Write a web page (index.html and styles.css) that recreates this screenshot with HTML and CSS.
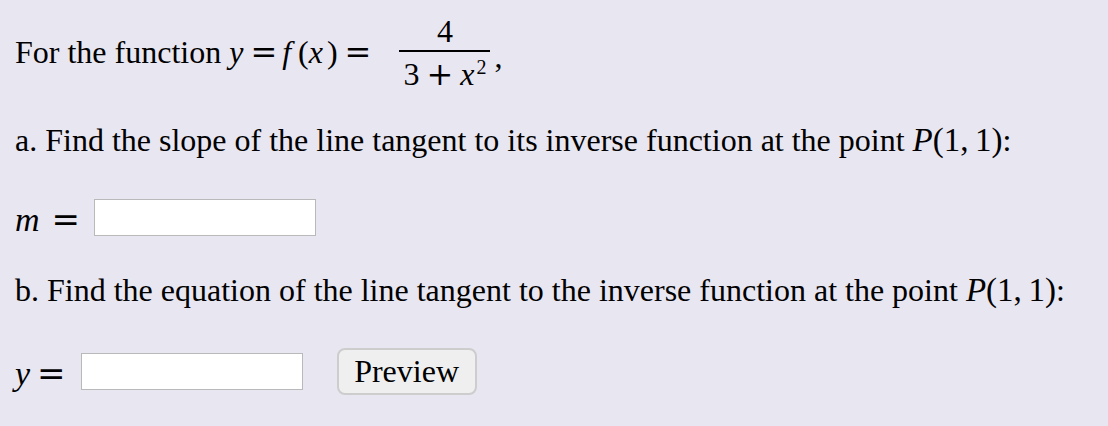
FILE: index.html
```html
<!DOCTYPE html>
<html>
<head>
<meta charset="utf-8">
<link rel="stylesheet" href="styles.css">
</head>
<body>
<div class="page">
  <p class="line intro">For the function <span class="math"><span class="mi">y</span><span class="mo eq1">=</span><span class="mi f">f</span><span class="mn">(</span><span class="mi x">x</span><span class="mn">)</span><span class="mo eq2">=</span><span class="frac"><span class="num">4</span><span class="den">3<span class="mo plus">+</span><span class="mi x">x</span><span class="sup">2</span></span></span><span class="comma">,</span></span></p>
  <p class="line qa">a. Find the slope of the line tangent to its inverse function at the point <span class="math"><span class="mi">P</span><span class="mn">(1,&#8201;1)</span></span>:</p>
  <div class="answer ans-m"><span class="math"><span class="mi">m</span><span class="mo eqm">=</span></span><input class="box" type="text"></div>
  <p class="line qb">b. Find the equation of the line tangent to the inverse function at the point <span class="math"><span class="mi">P</span><span class="mn">(1,&#8201;1)</span></span>:</p>
  <div class="answer ans-y"><span class="math"><span class="mi">y</span><span class="mo eqy">=</span></span><input class="box" type="text"><button class="btn">Preview</button></div>
</div>
</body>
</html>
```
FILE: styles.css
```css
html, body {
  margin: 0;
  padding: 0;
  background: #e8e6f0;
}
body {
  font-family: "Liberation Serif", "Times New Roman", serif;
  font-size: 32px;
  color: #000;
}
.page {
  padding: 0 0 0 15px;
}
.line {
  margin: 0;
  line-height: 38px;
  white-space: nowrap;
}
.math {
  font-family: "Liberation Serif", "Times New Roman", serif;
  font-size: 33px;
}
.mi {
  font-style: italic;
}
.mn {
  font-style: normal;
}
.mo {
  font-family: "DejaVu Serif", "Liberation Serif", serif;
  font-style: normal;
}
.intro {
  padding-top: 16px;
}
.intro .math {
  font-size: 32px;
}
.eq1 {
  margin: 0 5px 0 7px;
}
.f {
  margin-right: 7px;
}
.x {
  margin-right: 4px;
}
.eq2 {
  margin: 0 0 0 7px;
}
.frac {
  display: inline-block;
  vertical-align: -22px;
  text-align: center;
  font-size: 32px;
  margin-left: 28px;
}
.num {
  display: block;
  line-height: 30px;
  padding: 0 0 4px;
}
.den {
  display: block;
  line-height: 30px;
  border-top: 2px solid #000;
  padding: 7px 4px 0;
}
.plus {
  margin: 0 7px;
}
.den .x {
  margin-right: 2px;
}
.sup {
  font-size: 20px;
  vertical-align: 11px;
  line-height: 0;
}
.comma {
  display: inline-block;
  vertical-align: -4px;
  margin-left: 4px;
}
.qa {
  margin-top: 32px;
}
.answer {
  display: flex;
  align-items: center;
}
.answer .math {
  font-size: 34px;
  line-height: 36px;
  padding-top: 4px;
}
.eqm {
  margin: 0 14px 0 12px;
}
.eqy {
  margin: 0 15px 0 7px;
}
.ans-m {
  margin-top: 40px;
  height: 36px;
}
.qb {
  margin-top: 36px;
}
.ans-y {
  margin-top: 39px;
  height: 47px;
}
.box {
  width: 222px;
  height: 37px;
  box-sizing: border-box;
  border: 1px solid #b9b9b9;
  background: #fff;
  padding: 0;
  margin: 0;
}
.btn {
  margin-left: 34px;
  width: 140px;
  height: 47px;
  box-sizing: border-box;
  background: #efefef;
  border: 2px solid #cdcdcd;
  border-radius: 8px;
  font-family: "Liberation Serif", "Times New Roman", serif;
  font-size: 32px;
  color: #000;
  padding: 0;
}
```
